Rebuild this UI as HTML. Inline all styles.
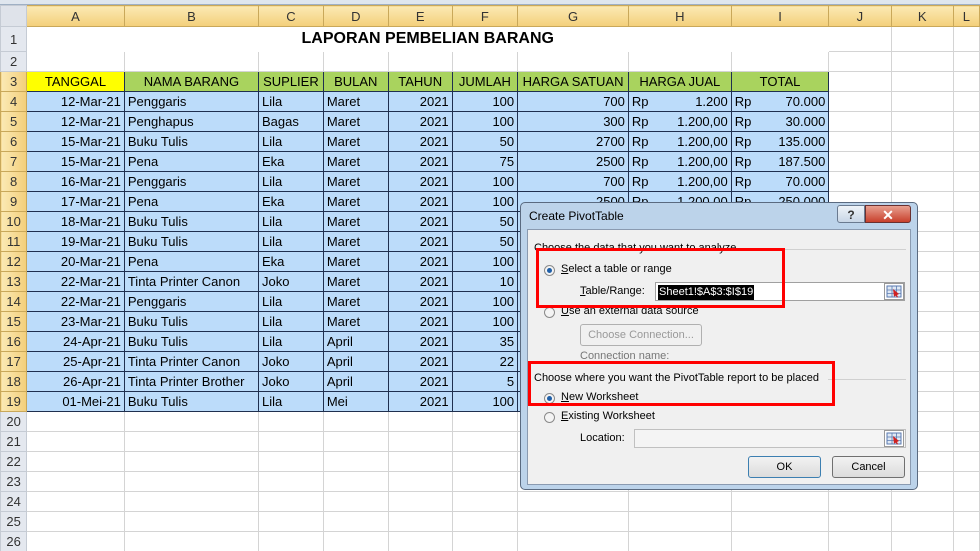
<!DOCTYPE html><html style="overflow:hidden;width:980px;height:551px"><head><style>
body{margin:0;width:980px;height:551px;overflow:hidden;background:#fff;font-family:"Liberation Sans",sans-serif;position:relative}
.a{position:absolute;box-sizing:border-box}
table{border-collapse:collapse;position:absolute;left:0;top:5px;font-size:13px}
td{padding:0 3px;border:1px solid #d4d4d4;height:19px;white-space:nowrap;overflow:hidden}
.ch td{border-color:#c9a85a;text-align:center;color:#333;height:20px;background:linear-gradient(#fbe9b4,#f3cf7a)}
td.rh{background:linear-gradient(90deg,#fbe9b4,#f3cf7a);border-color:#c9a85a;text-align:center;color:#333;padding:0}
td.rn{background:#e4e8ef;border-color:#c5cbd4;text-align:center;color:#333;padding:0}
.d td.c{background:#bcdcfa;border:1px solid #1f2f4f}
.r{text-align:right}
.dlg{left:520px;top:202px;width:398px;height:288px;background:#bcd3ea;border:1px solid #5a6a80;border-radius:5px}
.in{left:6px;top:26px;width:384px;height:256px;background:#f0f0f0;border:1px solid #8a9ab0;font-size:11px;color:#000}
.rad{width:11px;height:11px;border-radius:50%;border:1px solid #8a8a8a;background:#f4f4f4}
.rad.on::after{content:"";position:absolute;left:2px;top:2px;width:5px;height:5px;border-radius:50%;background:#1f5fa8}
.red{border:3px solid #f00}
.btn{border:1px solid #707070;border-radius:3px;background:linear-gradient(#f2f2f2,#dcdcdc);text-align:center;line-height:20px;font-size:11px}
</style></head><body>
<div class="a" style="left:0;top:0;width:980px;height:5px;background:#dfe6ee;border-bottom:1px solid #9fb0c4"></div>
<table>
<tr class="ch"><td style="width:20px;background:#dfe3ea;border-color:#c5cbd4"></td><td style="width:93px">A</td><td style="width:128px">B</td><td style="width:58px">C</td><td style="width:59px">D</td><td style="width:58px">E</td><td style="width:59px">F</td><td style="width:104px">G</td><td style="width:97px">H</td><td style="width:94px">I</td><td style="width:59px">J</td><td style="width:59px">K</td><td style="width:20px">L</td></tr>
<tr><td class="rn" style="height:24px">1</td><td colspan="9" style="text-align:center;font-weight:bold;font-size:16px;border-color:#fff">LAPORAN PEMBELIAN BARANG</td><td></td><td></td><td></td></tr>
<tr><td class="rn">2</td><td></td><td></td><td></td><td></td><td></td><td></td><td></td><td></td><td></td><td></td><td></td><td></td></tr>
<tr class="d"><td class="rh">3</td><td class="c" style="background:#ffff00;text-align:center">TANGGAL</td><td class="c" style="background:#a9d35e;text-align:center">NAMA BARANG</td><td class="c" style="background:#a9d35e;text-align:center">SUPLIER</td><td class="c" style="background:#a9d35e;text-align:center">BULAN</td><td class="c" style="background:#a9d35e;text-align:center">TAHUN</td><td class="c" style="background:#a9d35e;text-align:center">JUMLAH</td><td class="c" style="background:#a9d35e;text-align:center">HARGA SATUAN</td><td class="c" style="background:#a9d35e;text-align:center">HARGA JUAL</td><td class="c" style="background:#a9d35e;text-align:center">TOTAL</td><td></td><td></td><td></td></tr>
<tr class="d"><td class="rh">4</td><td class="c r">12-Mar-21</td><td class="c">Penggaris</td><td class="c">Lila</td><td class="c">Maret</td><td class="c r">2021</td><td class="c r">100</td><td class="c r">700</td><td class="c">Rp<span style="float:right">1.200</span></td><td class="c">Rp<span style="float:right">70.000</span></td><td></td><td></td><td></td></tr>
<tr class="d"><td class="rh">5</td><td class="c r">12-Mar-21</td><td class="c">Penghapus</td><td class="c">Bagas</td><td class="c">Maret</td><td class="c r">2021</td><td class="c r">100</td><td class="c r">300</td><td class="c">Rp<span style="float:right">1.200,00</span></td><td class="c">Rp<span style="float:right">30.000</span></td><td></td><td></td><td></td></tr>
<tr class="d"><td class="rh">6</td><td class="c r">15-Mar-21</td><td class="c">Buku Tulis</td><td class="c">Lila</td><td class="c">Maret</td><td class="c r">2021</td><td class="c r">50</td><td class="c r">2700</td><td class="c">Rp<span style="float:right">1.200,00</span></td><td class="c">Rp<span style="float:right">135.000</span></td><td></td><td></td><td></td></tr>
<tr class="d"><td class="rh">7</td><td class="c r">15-Mar-21</td><td class="c">Pena</td><td class="c">Eka</td><td class="c">Maret</td><td class="c r">2021</td><td class="c r">75</td><td class="c r">2500</td><td class="c">Rp<span style="float:right">1.200,00</span></td><td class="c">Rp<span style="float:right">187.500</span></td><td></td><td></td><td></td></tr>
<tr class="d"><td class="rh">8</td><td class="c r">16-Mar-21</td><td class="c">Penggaris</td><td class="c">Lila</td><td class="c">Maret</td><td class="c r">2021</td><td class="c r">100</td><td class="c r">700</td><td class="c">Rp<span style="float:right">1.200,00</span></td><td class="c">Rp<span style="float:right">70.000</span></td><td></td><td></td><td></td></tr>
<tr class="d"><td class="rh">9</td><td class="c r">17-Mar-21</td><td class="c">Pena</td><td class="c">Eka</td><td class="c">Maret</td><td class="c r">2021</td><td class="c r">100</td><td class="c r">2500</td><td class="c">Rp<span style="float:right">1.200,00</span></td><td class="c">Rp<span style="float:right">250.000</span></td><td></td><td></td><td></td></tr>
<tr class="d"><td class="rh">10</td><td class="c r">18-Mar-21</td><td class="c">Buku Tulis</td><td class="c">Lila</td><td class="c">Maret</td><td class="c r">2021</td><td class="c r">50</td><td class="c"></td><td class="c"></td><td class="c"></td><td></td><td></td><td></td></tr>
<tr class="d"><td class="rh">11</td><td class="c r">19-Mar-21</td><td class="c">Buku Tulis</td><td class="c">Lila</td><td class="c">Maret</td><td class="c r">2021</td><td class="c r">50</td><td class="c"></td><td class="c"></td><td class="c"></td><td></td><td></td><td></td></tr>
<tr class="d"><td class="rh">12</td><td class="c r">20-Mar-21</td><td class="c">Pena</td><td class="c">Eka</td><td class="c">Maret</td><td class="c r">2021</td><td class="c r">100</td><td class="c"></td><td class="c"></td><td class="c"></td><td></td><td></td><td></td></tr>
<tr class="d"><td class="rh">13</td><td class="c r">22-Mar-21</td><td class="c">Tinta Printer Canon</td><td class="c">Joko</td><td class="c">Maret</td><td class="c r">2021</td><td class="c r">10</td><td class="c"></td><td class="c"></td><td class="c"></td><td></td><td></td><td></td></tr>
<tr class="d"><td class="rh">14</td><td class="c r">22-Mar-21</td><td class="c">Penggaris</td><td class="c">Lila</td><td class="c">Maret</td><td class="c r">2021</td><td class="c r">100</td><td class="c"></td><td class="c"></td><td class="c"></td><td></td><td></td><td></td></tr>
<tr class="d"><td class="rh">15</td><td class="c r">23-Mar-21</td><td class="c">Buku Tulis</td><td class="c">Lila</td><td class="c">Maret</td><td class="c r">2021</td><td class="c r">100</td><td class="c"></td><td class="c"></td><td class="c"></td><td></td><td></td><td></td></tr>
<tr class="d"><td class="rh">16</td><td class="c r">24-Apr-21</td><td class="c">Buku Tulis</td><td class="c">Lila</td><td class="c">April</td><td class="c r">2021</td><td class="c r">35</td><td class="c"></td><td class="c"></td><td class="c"></td><td></td><td></td><td></td></tr>
<tr class="d"><td class="rh">17</td><td class="c r">25-Apr-21</td><td class="c">Tinta Printer Canon</td><td class="c">Joko</td><td class="c">April</td><td class="c r">2021</td><td class="c r">22</td><td class="c"></td><td class="c"></td><td class="c"></td><td></td><td></td><td></td></tr>
<tr class="d"><td class="rh">18</td><td class="c r">26-Apr-21</td><td class="c">Tinta Printer Brother</td><td class="c">Joko</td><td class="c">April</td><td class="c r">2021</td><td class="c r">5</td><td class="c"></td><td class="c"></td><td class="c"></td><td></td><td></td><td></td></tr>
<tr class="d"><td class="rh">19</td><td class="c r">01-Mei-21</td><td class="c">Buku Tulis</td><td class="c">Lila</td><td class="c">Mei</td><td class="c r">2021</td><td class="c r">100</td><td class="c"></td><td class="c"></td><td class="c"></td><td></td><td></td><td></td></tr>
<tr><td class="rn">20</td><td></td><td></td><td></td><td></td><td></td><td></td><td></td><td></td><td></td><td></td><td></td><td></td></tr>
<tr><td class="rn">21</td><td></td><td></td><td></td><td></td><td></td><td></td><td></td><td></td><td></td><td></td><td></td><td></td></tr>
<tr><td class="rn">22</td><td></td><td></td><td></td><td></td><td></td><td></td><td></td><td></td><td></td><td></td><td></td><td></td></tr>
<tr><td class="rn">23</td><td></td><td></td><td></td><td></td><td></td><td></td><td></td><td></td><td></td><td></td><td></td><td></td></tr>
<tr><td class="rn">24</td><td></td><td></td><td></td><td></td><td></td><td></td><td></td><td></td><td></td><td></td><td></td><td></td></tr>
<tr><td class="rn">25</td><td></td><td></td><td></td><td></td><td></td><td></td><td></td><td></td><td></td><td></td><td></td><td></td></tr>
<tr><td class="rn">26</td><td></td><td></td><td></td><td></td><td></td><td></td><td></td><td></td><td></td><td></td><td></td><td></td></tr>
</table>

<div class="a dlg">
<div class="a" style="left:8px;top:6px;font-size:12px;color:#000">Create PivotTable</div>
<div class="a" style="left:316px;top:2px;width:28px;height:18px;border:1px solid #6a7a90;border-radius:3px 0 0 3px;background:linear-gradient(#eef3f8,#c8d6e6);text-align:center;font-size:12px;font-weight:bold;color:#333;line-height:18px">?</div>
<div class="a" style="left:344px;top:2px;width:46px;height:18px;border:1px solid #6a3030;border-radius:0 3px 3px 0;background:linear-gradient(#e8a090,#c8402c);text-align:center;color:#fff;font-weight:bold;font-size:14px;line-height:18px">✕</div>
<div class="a in">
<div class="a" style="left:6px;top:12px">Choose the data that you want to analyze</div>
<div class="a" style="left:210px;top:19px;width:168px;border-top:1px solid #d0d0d0"></div>
<div class="a rad on" style="left:16px;top:35px"></div><div class="a" style="left:33px;top:33px"><u>S</u>elect a table or range</div>
<div class="a" style="left:52px;top:55px"><u>T</u>able/Range:</div>
<div class="a" style="left:127px;top:52px;width:250px;height:19px;background:#fff;border:1px solid #a0a0a0"><span style="background:#000;color:#fff;margin:2px;display:inline-block;padding:0 1px;line-height:15px">Sheet1!$A$3:$I$19</span></div>
<svg class="a" style="left:356px;top:53px" width="20" height="17" viewBox="0 0 20 17"><rect x=".5" y=".5" width="19" height="16" fill="#fff" stroke="#999"/><rect x="3" y="3" width="14" height="11" fill="#dfe8f4" stroke="#5a7ab0"/><path d="M3 7H17M3 10.5H17M8 3V14M12.5 3V14" stroke="#5a7ab0" stroke-width=".8"/><path d="M9 6l6 5-2 1 1 2-1 .6-1-2-2 1z" fill="#d02020"/></svg>
<div class="a rad" style="left:16px;top:77px"></div><div class="a" style="left:33px;top:75px"><u>U</u>se an external data source</div>
<div class="a" style="left:52px;top:94px;width:122px;height:22px;border:1px solid #b0b0b0;border-radius:3px;color:#999;text-align:center;line-height:20px">Choose Connection...</div>
<div class="a" style="left:52px;top:120px;color:#777">Connection name:</div>
<div class="a" style="left:6px;top:142px">Choose where you want the PivotTable report to be placed</div>
<div class="a" style="left:300px;top:149px;width:78px;border-top:1px solid #d0d0d0"></div>
<div class="a rad on" style="left:16px;top:163px"></div><div class="a" style="left:33px;top:161px"><u>N</u>ew Worksheet</div>
<div class="a rad" style="left:16px;top:182px"></div><div class="a" style="left:33px;top:180px"><u>E</u>xisting Worksheet</div>
<div class="a" style="left:52px;top:202px">Location:</div>
<div class="a" style="left:106px;top:199px;width:272px;height:19px;background:#f4f4f4;border:1px solid #c0c0c0"></div>
<svg class="a" style="left:356px;top:200px" width="20" height="17" viewBox="0 0 20 17"><rect x=".5" y=".5" width="19" height="16" fill="#fff" stroke="#999"/><rect x="3" y="3" width="14" height="11" fill="#dfe8f4" stroke="#5a7ab0"/><path d="M3 7H17M3 10.5H17M8 3V14M12.5 3V14" stroke="#5a7ab0" stroke-width=".8"/><path d="M9 6l6 5-2 1 1 2-1 .6-1-2-2 1z" fill="#d02020"/></svg>
<div class="a btn" style="left:220px;top:226px;width:73px;height:22px;border-color:#3c7fb1">OK</div>
<div class="a btn" style="left:304px;top:226px;width:73px;height:22px">Cancel</div>
</div>
</div>
<div class="a red" style="left:536px;top:248px;width:249px;height:60px"></div>
<div class="a red" style="left:528px;top:361px;width:307px;height:45px"></div>
</body></html>
